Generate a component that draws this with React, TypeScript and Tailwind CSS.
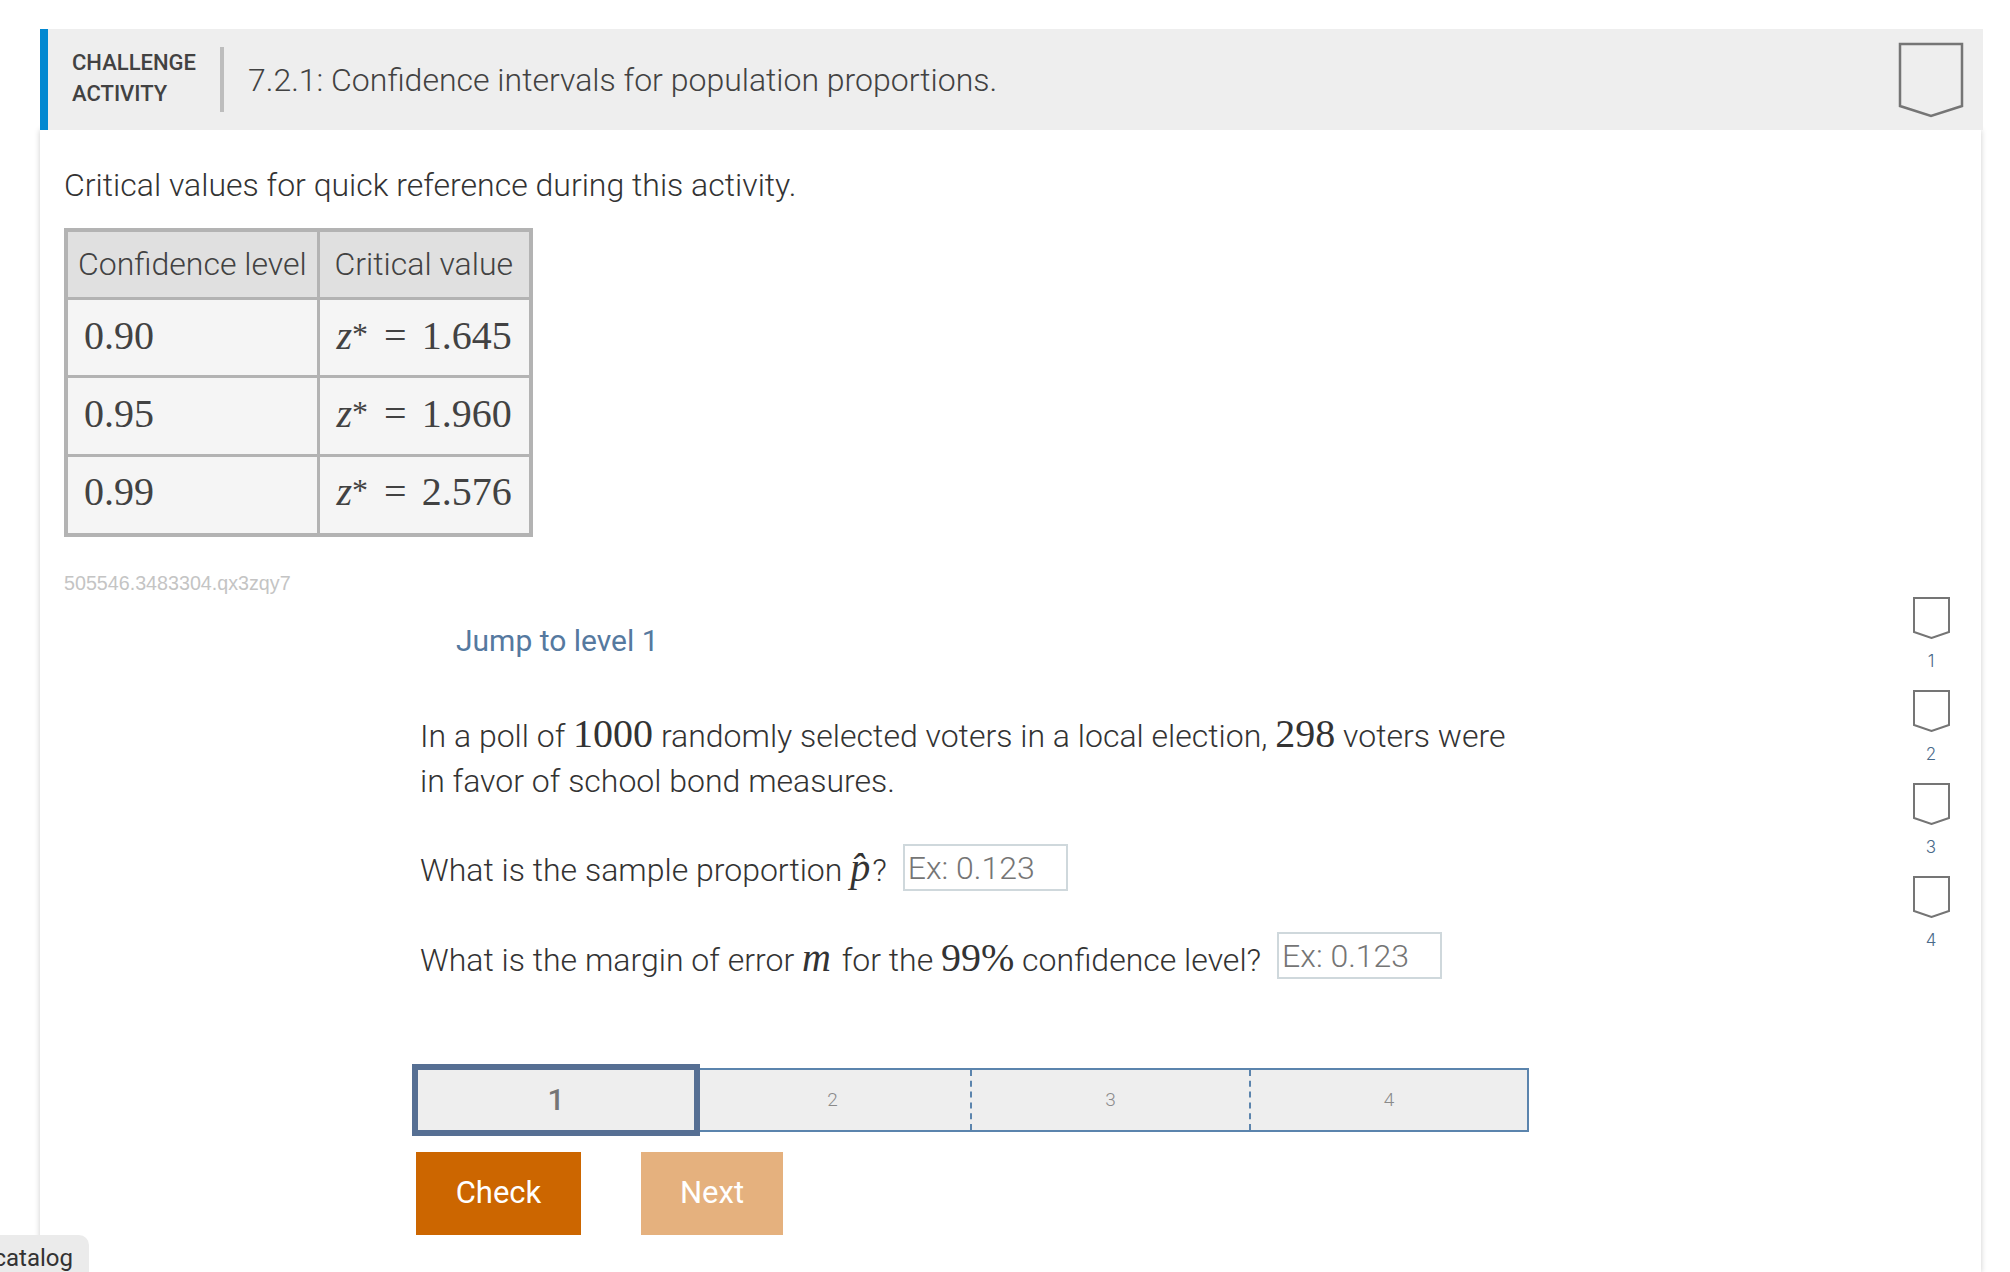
import React from 'react';

const roboto = { fontFamily: 'Roboto, sans-serif' };

const Shield: React.FC<{ big?: boolean }> = ({ big = false }) => {
  if (big) {
    return (
      <svg width="66" height="76" viewBox="0 0 66 76" fill="none" className="block">
        <path d="M2 2H64V64L33 74L2 64Z" stroke="#757575" strokeWidth="2.5" />
      </svg>
    );
  }
  return (
    <svg width="38" height="43" viewBox="0 0 38 43" fill="none" className="block">
      <path d="M2 2H37V36L19.5 42L2 36Z" stroke="#757575" strokeWidth="2" />
    </svg>
  );
};

const Num: React.FC<{ children: React.ReactNode }> = ({ children }) => (
  <span className="font-['Liberation_Serif',serif] text-[40px] leading-[40px] font-normal">{children}</span>
);

const ZValue: React.FC<{ value: string }> = ({ value }) => (
  <span className="font-['Liberation_Serif',serif] text-[40px] whitespace-nowrap">
    <i>z</i>
    <sup className="text-[32px] leading-none relative -top-[4px] align-baseline">*</sup>
    <span className="ml-[16px] mr-[15px]">=</span>
    {value}
  </span>
);

const rows = [
  { level: '0.90', value: '1.645', h: 'h-[78px]' },
  { level: '0.95', value: '1.960', h: 'h-[79px]' },
  { level: '0.99', value: '2.576', h: 'h-[80px]' }
];

const AnswerInput: React.FC<{ first?: boolean }> = ({ first = false }) => (
  <input
    readOnly
    placeholder="Ex: 0.123"
    className={`relative ${first ? '-top-[2px]' : '-top-[4px]'} inline-block w-[165px] h-[47px] ml-[16px] px-[3px] border-2 border-[#cfd8dc] bg-white text-[32px] font-light outline-none placeholder:text-[#757575]`}
    style={roboto}
  />
);

export default function App() {
  return (
    <div className="relative w-[2010px] h-[1272px] overflow-hidden bg-white text-[#333] font-['Roboto',sans-serif] font-light">
      <div className="pt-[29px] pl-[40px]">
        <div className="relative z-10 flex items-center w-[1943px] h-[101px] bg-[#eeeeee] border-l-[8px] border-[#0288d1]">
          <div className="w-[146px] pl-[24px] pb-[4px] text-[22px] leading-[31px] font-medium text-[#424242] box-content">
            CHALLENGE
            <br />
            ACTIVITY
          </div>
          <div className="w-[4px] h-[65px] ml-[2px] bg-[#bdbdbd]" />
          <div className="ml-[24px] text-[32px] text-[#424242]">
            7.2.1: Confidence intervals for population proportions.
          </div>
          <div className="ml-auto mr-[19px]">
            <Shield big />
          </div>
        </div>

        <div className="flex w-[1941px] h-[1143px] bg-white shadow-[0_0_6px_rgba(0,0,0,0.2)]">
          <div className="flex-1 pl-[24px]">
            <p className="mt-[33px] text-[32px] leading-[44px]">Critical values for quick reference during this activity.</p>

            <table className="mt-[21px] w-[469px] border-collapse border-[4px] border-[#b3b3b3] text-[#424242]">
              <thead>
                <tr className="h-[68px] bg-[#e0e0e0]">
                  <th className="w-[252px] pl-[10px] pr-0 text-left text-[32px] font-light border-r-[3px] border-b-[3px] border-[#b3b3b3]">Confidence level</th>
                  <th className="pl-[15px] pr-0 text-left text-[32px] font-light border-b-[3px] border-[#b3b3b3]">Critical value</th>
                </tr>
              </thead>
              <tbody>
                {rows.map((row, i) => (
                  <tr key={row.level} className={`${row.h} bg-[#f5f5f5] ${i < 2 ? 'border-b-[3px] border-[#b3b3b3]' : ''}`}>
                    <td className={`pl-[16px] ${i < 2 ? 'pb-[3px]' : 'pb-[5px]'} border-r-[3px] border-[#b3b3b3]`}>
                      <Num>{row.level}</Num>
                    </td>
                    <td className={`pl-[17px] ${i < 2 ? 'pb-[3px]' : 'pb-[5px]'}`}>
                      <ZValue value={row.value} />
                    </td>
                  </tr>
                ))}
              </tbody>
            </table>

            <div className="mt-[34px] font-['Liberation_Sans',sans-serif] font-normal text-[19.7px] leading-[24px] text-[#c4c4c4]">505546.3483304.qx3zqy7</div>

            <div className="ml-[392px] mt-[26px] text-[30px] leading-[40px] font-normal text-[#55799f]">Jump to level 1</div>

            <div className="ml-[356px] mt-[53px] w-[1095px] text-[32px] leading-[45px]">
              <p>
                In a poll of <Num>1000</Num> randomly selected voters in a local election, <Num>298</Num> voters were in favor of school bond measures.
              </p>
              <p className="mt-[42px]">
                What is the sample proportion <Num><i>p̂</i></Num><span className="ml-[2px]">?</span>
                <AnswerInput first />
              </p>
              <p className="mt-[43px]">
                What is the margin of error <Num><i className="mr-[3px]">m</i></Num> for the <Num>99%</Num> confidence level?
                <AnswerInput />
              </p>
            </div>

            <div className="flex items-center ml-[348px] mt-[81px]">
              <div className="flex items-center justify-center w-[288px] h-[72px] pb-[2px] border-[6px] border-[#566f93] bg-[#eeeeee] text-[30px] font-medium text-[#757575]">1</div>
              <div className="flex w-[829px] h-[64px] border-2 border-l-0 border-[#5b84ad] bg-[#eeeeee] text-[19px] text-[#8a8a8a]">
                <div className="flex items-center justify-center w-[272px] pr-[5px] border-r-2 border-dashed border-[#5b84ad]">2</div>
                <div className="flex items-center justify-center w-[279px] border-r-2 border-dashed border-[#5b84ad]">3</div>
                <div className="flex flex-1 items-center justify-center">4</div>
              </div>
            </div>

            <div className="flex ml-[352px] mt-[16px] gap-[60px] text-[31px] font-normal text-white">
              <div className="flex items-center justify-center w-[165px] h-[83px] bg-[#cc6600]">Check</div>
              <div className="flex items-center justify-center w-[142px] h-[83px] bg-[#e5b17e]">Next</div>
            </div>
          </div>

          <div className="w-[38px] mr-[31px] pt-[466px] shrink-0">
            {['1', '2', '3', '4'].map((n) => (
              <div key={n} className="h-[93px] flex flex-col items-center">
                <Shield />
                <span className="mt-[10px] text-[17px] leading-[24px] font-['Inter',sans-serif] font-light text-[#4a6a8a]">{n}</span>
              </div>
            ))}
          </div>
        </div>
      </div>

      <div className="absolute z-20 left-0 bottom-0 w-[89px] h-[37px] overflow-hidden rounded-tr-[10px] bg-[#ebebeb] text-[24px] font-normal leading-[46px] text-[#333] font-['Roboto',sans-serif]">
        <span className="absolute right-[16px] top-0">catalog</span>
      </div>
    </div>
  );
}
